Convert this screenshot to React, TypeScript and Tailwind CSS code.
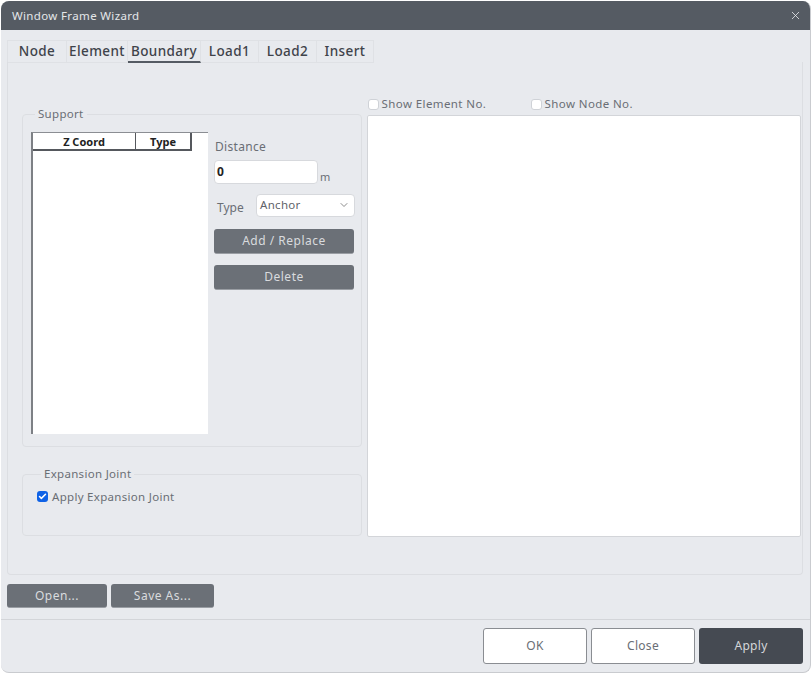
import { X, ChevronDown, Check } from "lucide-react";

const font = { fontFamily: '"Noto Sans", "Noto Sans CJK KR", sans-serif' };

function Tab({ label, w, active }: { label: string; w: string; active?: boolean }) {
  return (
    <div
      className={`${w} h-[22px] flex items-center justify-center border-r border-[#dfe1e5] text-[13.5px] font-medium tracking-[0.4px] text-[#3f434a] leading-none ${
        active ? "border-b-2 border-b-[#555b63] pt-[2px]" : "border-b border-b-[#dfe1e5]"
      }`}
    >
      {label}
    </div>
  );
}

function Box({ checked }: { checked?: boolean }) {
  return checked ? (
    <span className="w-[11px] h-[11px] rounded-[3px] bg-[#0f62e6] flex items-center justify-center shrink-0">
      <Check size={9} strokeWidth={4} className="text-white" />
    </span>
  ) : (
    <span className="w-[11px] h-[11px] rounded-[3px] bg-white border border-[#cfd2d7] shrink-0" />
  );
}

function GrayButton({ label, w, h }: { label: string; w: string; h: string }) {
  return (
    <button className={`${w} ${h} rounded-[3px] bg-[#6b7077] border-b border-[#9a9ea4] text-[#d9dbde] text-[12px] tracking-[0.5px] flex items-center justify-center`}>
      {label}
    </button>
  );
}

export default function App() {
  return (
    <div style={font} className="w-[811px] h-[673px] bg-white overflow-hidden">
      <div className="w-[810px] h-[672px] ml-[1px] mt-[1px] rounded-[8px] bg-[#e8eaee] border-r border-b border-[#c9cbcf] flex flex-col overflow-hidden">
        {/* Title bar */}
        <div className="h-[29px] bg-[#555b63] flex items-center justify-between pl-[11px] pr-[8px] shrink-0">
          <span className="text-[11.5px] text-[#e4e6e9] tracking-[0.35px]">Window Frame Wizard</span>
          <X size={13} strokeWidth={1.5} className="text-[#e8eaee]" />
        </div>

        {/* Tabs */}
        <div className="flex pl-[6px] mt-[10px] h-[22px] shrink-0">
          <div className="flex border-t border-l border-[#dfe1e5]">
            <Tab label="Node" w="w-[59px]" />
            <Tab label="Element" w="w-[61px]" />
            <Tab label="Boundary" w="w-[73px]" active />
            <Tab label="Load1" w="w-[58px]" />
            <Tab label="Load2" w="w-[58px]" />
            <Tab label="Insert" w="w-[57px]" />
          </div>
        </div>

        {/* Panel */}
        <div className="ml-[6px] w-[796px] h-[513px] border border-t-0 border-[#dcdee2] rounded-b-[4px] pl-[14px] pr-[1px] flex gap-[5px] shrink-0">
          {/* Left column */}
          <div className="w-[340px] pt-[44px] flex flex-col">
            <fieldset className="h-[341px] border border-[#dcdee2] rounded-[4px] pl-[8px]">
              <legend className="ml-[4px] px-[3px] text-[11.5px] leading-[16px] text-[#6a6e75] tracking-[0.3px]">Support</legend>
              <div className="flex mt-[10px]">
                <div className="w-[177px] h-[302px] bg-white border-l-2 border-t border-[#7d8085] border-t-[#8b8e93] shrink-0">
                  <div className="flex h-[18px] w-[159px] border-b-2 border-r-2 border-[#55585d] text-[11px] font-bold text-[#222] leading-none">
                    <div className="w-[103px] border-r border-[#55585d] flex items-center justify-center">Z Coord</div>
                    <div className="flex-1 flex items-center justify-center">Type</div>
                  </div>
                </div>
                <div className="ml-[6px] flex flex-col items-start">
                  <span className="mt-[7px] ml-[1px] text-[12px] leading-[16px] text-[#6a6e75] tracking-[0.3px]">Distance</span>
                  <div className="mt-[5px] flex items-end">
                    <div className="w-[104px] h-[24px] bg-white border border-[#d7d9dd] rounded-[4px] text-[12px] font-bold text-[#222] pl-[2px] flex items-center">0</div>
                    <span className="ml-[2px] text-[11px] leading-[14px] text-[#6a6e75]">m</span>
                  </div>
                  <div className="mt-[9px] flex items-center">
                    <span className="ml-[3px] w-[39px] text-[12px] text-[#6a6e75] pt-[6px]">Type</span>
                    <div className="w-[99px] h-[23px] bg-white border border-[#d7d9dd] rounded-[4px] flex items-center justify-between pl-[3px] pr-[4px] text-[11.5px] text-[#5f636a] tracking-[0.3px]">
                      <span className="-mt-[1px]">Anchor</span>
                      <ChevronDown size={12} strokeWidth={1.5} className="text-[#666]" />
                    </div>
                  </div>
                  <div className="mt-[12px]">
                    <GrayButton label="Add / Replace" w="w-[140px]" h="h-[25px]" />
                  </div>
                  <div className="mt-[11px]">
                    <GrayButton label="Delete" w="w-[140px]" h="h-[25px]" />
                  </div>
                </div>
              </div>
            </fieldset>
            <fieldset className="mt-[19px] h-[70px] border border-[#dcdee2] rounded-[4px] pl-[14px]">
              <legend className="ml-[4px] px-[3px] text-[11.5px] leading-[16px] text-[#6a6e75] tracking-[0.3px]">Expansion Joint</legend>
              <label className="flex items-center gap-[4px] mt-[6px] text-[11.5px] text-[#6a6e75] tracking-[0.3px]">
                <Box checked />
                Apply Expansion Joint
              </label>
            </fieldset>
          </div>

          {/* Right column */}
          <div className="w-[435px] pt-[31px] flex flex-col">
            <div className="h-[22px] flex items-center text-[11.5px] text-[#6a6e75] tracking-[0.4px]">
              <label className="w-[164px] flex items-center gap-[3px] pl-[1px]">
                <Box />
                Show Element No.
              </label>
              <label className="flex items-center gap-[3px]">
                <Box />
                Show Node No.
              </label>
            </div>
            <div className="h-[422px] bg-white border border-[#d3d5d9] rounded-[2px]" />
          </div>
        </div>

        {/* Open / Save */}
        <div className="flex gap-[4px] pl-[6px] mt-[9px] shrink-0">
          <GrayButton label="Open..." w="w-[100px]" h="h-[24px]" />
          <GrayButton label="Save As..." w="w-[103px]" h="h-[24px]" />
        </div>

        {/* Footer */}
        <div className="mt-[11px] border-t border-[#d3d5d9] flex justify-end gap-[4px] pt-[8px] pr-[7px] flex-1">
          <button className="w-[104px] h-[36px] rounded-[3px] bg-white border border-[#8a8d92] text-[12px] text-[#6a6e75] tracking-[0.3px]">OK</button>
          <button className="w-[104px] h-[36px] rounded-[3px] bg-white border border-[#8a8d92] text-[12px] text-[#6a6e75] tracking-[0.3px]">Close</button>
          <button className="w-[104px] h-[36px] rounded-[3px] bg-[#454a52] text-[12px] text-[#d4d6d9] tracking-[0.3px]">Apply</button>
        </div>
      </div>
    </div>
  );
}
